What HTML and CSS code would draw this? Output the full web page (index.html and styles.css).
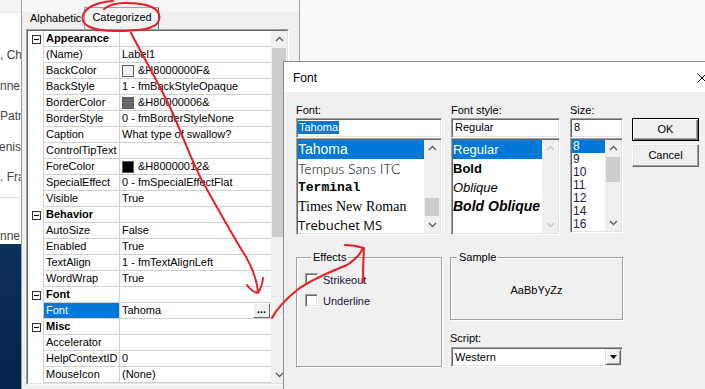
FILE: index.html
```html
<!DOCTYPE html>
<html>
<head>
<meta charset="utf-8">
<title>Font dialog</title>
<link rel="stylesheet" href="styles.css">
</head>
<body>
<div class="screen">
  <div class="bgwin">
    <div class="bg-top"></div>
    <div class="bg-list">
      <div class="bg-row">, Ch</div>
      <div class="bg-row">nne,</div>
      <div class="bg-row">Patr</div>
      <div class="bg-row shift">enise</div>
      <div class="bg-row">. Fra</div>
    </div>
    <div class="bg-foot">nne</div>
    <div class="bg-desk"></div>
  </div>

  <div class="props">
    <div class="tabs">
      <div class="tab">Alphabetic</div>
      <div class="tab sel">Categorized</div>
    </div>
    <div class="grid">
      <div class="grid-in">
        <div class="rows">
          <div class="row cat"><span class="gut"><svg width="9" height="9" viewBox="0 0 9 9"><rect x="0.5" y="0.5" width="8" height="8" fill="#fff" stroke="#333"/><path d="M2 4.5H7" stroke="#000"/></svg></span><span class="name">Appearance</span><span class="val"></span></div>
          <div class="row"><span class="gut"></span><span class="name">(Name)</span><span class="val">Label1</span></div>
          <div class="row"><span class="gut"></span><span class="name">BackColor</span><span class="val"><span class="sw sw-light"></span>&amp;H8000000F&amp;</span></div>
          <div class="row"><span class="gut"></span><span class="name">BackStyle</span><span class="val">1 - fmBackStyleOpaque</span></div>
          <div class="row"><span class="gut"></span><span class="name">BorderColor</span><span class="val"><span class="sw sw-gray"></span>&amp;H80000006&amp;</span></div>
          <div class="row"><span class="gut"></span><span class="name">BorderStyle</span><span class="val">0 - fmBorderStyleNone</span></div>
          <div class="row"><span class="gut"></span><span class="name">Caption</span><span class="val">What type of swallow?</span></div>
          <div class="row"><span class="gut"></span><span class="name">ControlTipText</span><span class="val"></span></div>
          <div class="row"><span class="gut"></span><span class="name">ForeColor</span><span class="val"><span class="sw sw-black"></span>&amp;H80000012&amp;</span></div>
          <div class="row"><span class="gut"></span><span class="name">SpecialEffect</span><span class="val">0 - fmSpecialEffectFlat</span></div>
          <div class="row"><span class="gut"></span><span class="name">Visible</span><span class="val">True</span></div>
          <div class="row cat"><span class="gut"><svg width="9" height="9" viewBox="0 0 9 9"><rect x="0.5" y="0.5" width="8" height="8" fill="#fff" stroke="#333"/><path d="M2 4.5H7" stroke="#000"/></svg></span><span class="name">Behavior</span><span class="val"></span></div>
          <div class="row"><span class="gut"></span><span class="name">AutoSize</span><span class="val">False</span></div>
          <div class="row"><span class="gut"></span><span class="name">Enabled</span><span class="val">True</span></div>
          <div class="row"><span class="gut"></span><span class="name">TextAlign</span><span class="val">1 - fmTextAlignLeft</span></div>
          <div class="row"><span class="gut"></span><span class="name">WordWrap</span><span class="val">True</span></div>
          <div class="row cat"><span class="gut"><svg width="9" height="9" viewBox="0 0 9 9"><rect x="0.5" y="0.5" width="8" height="8" fill="#fff" stroke="#333"/><path d="M2 4.5H7" stroke="#000"/></svg></span><span class="name">Font</span><span class="val"></span></div>
          <div class="row"><span class="gut"></span><span class="name selname">Font</span><span class="val">Tahoma<span class="dots">...</span></span></div>
          <div class="row cat"><span class="gut"><svg width="9" height="9" viewBox="0 0 9 9"><rect x="0.5" y="0.5" width="8" height="8" fill="#fff" stroke="#333"/><path d="M2 4.5H7" stroke="#000"/></svg></span><span class="name">Misc</span><span class="val"></span></div>
          <div class="row"><span class="gut"></span><span class="name">Accelerator</span><span class="val"></span></div>
          <div class="row"><span class="gut"></span><span class="name">HelpContextID</span><span class="val">0</span></div>
          <div class="row"><span class="gut"></span><span class="name">MouseIcon</span><span class="val">(None)</span></div>
        </div>
        <div class="vscroll">
          <div class="arr"><svg width="9" height="6" viewBox="0 0 9 6"><path d="M1 5L4.5 1.5L8 5" fill="none" stroke="#606060" stroke-width="1.4"/></svg></div>
          <div class="thumb big"></div>
          <div class="spacer"></div>
          <div class="arr"><svg width="9" height="6" viewBox="0 0 9 6"><path d="M1 1L4.5 4.5L8 1" fill="none" stroke="#606060" stroke-width="1.4"/></svg></div>
        </div>
      </div>
    </div>
  </div>

  <div class="dialog">
    <div class="titlebar">
      <span class="title">Font</span>
      <svg class="close" width="10" height="10" viewBox="0 0 10 10"><path d="M0.5 0.5L9.5 9.5M9.5 0.5L0.5 9.5" stroke="#111" stroke-width="1"/></svg>
    </div>
    <div class="dbody">
      <div class="toprow">
        <div class="col c-font">
          <div class="lbl">Font:</div>
          <div class="tbox"><span class="seltext">Tahoma</span></div>
          <div class="list l-font">
            <div class="items">
              <div class="it fi sel f-tahoma">Tahoma</div>
              <div class="it fi f-tempus">Tempus Sans ITC</div>
              <div class="it fi f-term">Terminal</div>
              <div class="it fi f-times">Times New Roman</div>
              <div class="it fi f-treb">Trebuchet MS</div>
            </div>
            <div class="sb">
              <div class="arr"><svg width="9" height="6" viewBox="0 0 9 6"><path d="M1 5L4.5 1.5L8 5" fill="none" stroke="#606060" stroke-width="1.4"/></svg></div>
              <div class="spacer"></div>
              <div class="thumb t-font"></div>
              <div class="arr"><svg width="9" height="6" viewBox="0 0 9 6"><path d="M1 1L4.5 4.5L8 1" fill="none" stroke="#606060" stroke-width="1.4"/></svg></div>
            </div>
          </div>
        </div>
        <div class="col c-style">
          <div class="lbl">Font style:</div>
          <div class="tbox"><span class="plain">Regular</span></div>
          <div class="list l-style">
            <div class="items">
              <div class="it si sel">Regular</div>
              <div class="it si s-bold">Bold</div>
              <div class="it si s-obl">Oblique</div>
              <div class="it si s-bobl">Bold Oblique</div>
            </div>
            <div class="sb">
              <div class="arr"><svg width="9" height="6" viewBox="0 0 9 6"><path d="M1 5L4.5 1.5L8 5" fill="none" stroke="#c4c4c4" stroke-width="1.4"/></svg></div>
              <div class="spacer"></div>
              <div class="arr"><svg width="9" height="6" viewBox="0 0 9 6"><path d="M1 1L4.5 4.5L8 1" fill="none" stroke="#c4c4c4" stroke-width="1.4"/></svg></div>
            </div>
          </div>
        </div>
        <div class="col c-size">
          <div class="lbl">Size:</div>
          <div class="tbox"><span class="plain">8</span></div>
          <div class="list l-size">
            <div class="items">
              <div class="it zi sel">8</div>
              <div class="it zi">9</div>
              <div class="it zi">10</div>
              <div class="it zi">11</div>
              <div class="it zi">12</div>
              <div class="it zi">14</div>
              <div class="it zi">16</div>
            </div>
            <div class="sb">
              <div class="arr"><svg width="9" height="6" viewBox="0 0 9 6"><path d="M1 5L4.5 1.5L8 5" fill="none" stroke="#606060" stroke-width="1.4"/></svg></div>
              <div class="thumb t-size"></div>
              <div class="spacer"></div>
              <div class="arr"><svg width="9" height="6" viewBox="0 0 9 6"><path d="M1 1L4.5 4.5L8 1" fill="none" stroke="#606060" stroke-width="1.4"/></svg></div>
            </div>
          </div>
        </div>
        <div class="col c-btns">
          <div class="btn def">OK</div>
          <div class="btn">Cancel</div>
        </div>
      </div>
      <div class="botrow">
        <fieldset class="grp g-eff">
          <legend>Effects</legend>
          <div class="chk first"><span class="box"></span><span class="chk-t">Strikeout</span></div>
          <div class="chk"><span class="box"></span><span class="chk-t">Underline</span></div>
        </fieldset>
        <div class="rcol">
          <fieldset class="grp g-sample">
            <legend>Sample</legend>
            <div class="sample">AaBbYyZz</div>
          </fieldset>
          <div class="lbl script">Script:</div>
          <div class="combo">
            <span class="combo-t">Western</span>
            <span class="ddbtn"><svg width="7" height="4" viewBox="0 0 7 4"><path d="M0 0H7L3.5 4Z" fill="#000"/></svg></span>
          </div>
        </div>
      </div>
    </div>
  </div>

  <svg class="ink" width="705" height="389" viewBox="0 0 705 389">
    <g fill="none" stroke="#ec1c24" stroke-width="2" stroke-linecap="round" stroke-linejoin="round">
      <path d="M113 1C100 2 86 6 83 15C80 25 92 31 115 31C135 31 157 30 159 20C162 8 148 3 125 3C116 3 109 5 104 9"/>
      <path d="M131 33C140 50 152 72 165 97C180 126 190 160 205 186C219 211 233 236 246 257C253 269 257 281 258 292"/>
      <path d="M247 285Q252 292 258 293Q262 287 263 278"/>
      <path d="M272 318C276 310 285 300 297 290C312 279 330 272 347 265C355 260 360 255 363 248"/>
      <path d="M345 245Q355 245 364 248Q363 265 363 282"/>
    </g>
  </svg>
</div>
</body>
</html>
```
FILE: styles.css
```css
html, body {
  margin: 0;
  padding: 0;
}
body {
  font-family: "Liberation Sans", Arial, sans-serif;
  font-size: 11px;
  color: #000;
  background: #f9f9f9;
}
.screen {
  position: relative;
  width: 705px;
  height: 389px;
  overflow: hidden;
  display: flex;
  background: #f9f9f9;
}

/* background window on the left */
.bgwin {
  width: 21px;
  flex: none;
  display: flex;
  flex-direction: column;
  overflow: hidden;
}
.bg-top {
  height: 12px;
  background: #f3f3f3;
  border-bottom: 1px solid #e4e4e4;
  flex: none;
}
.bg-list {
  background: #fff;
  padding-top: 27px;
  padding-bottom: 4px;
  border-bottom: 1px solid #e2e2e2;
  flex: none;
}
.bg-row {
  height: 30.5px;
  line-height: 30.5px;
  font-size: 12px;
  color: #444;
  white-space: nowrap;
}
.bg-row.shift {
  margin-left: -1px;
}
.bg-foot {
  height: 46px;
  box-sizing: border-box;
  padding-top: 31px;
  line-height: 14px;
  font-size: 12px;
  color: #444;
  background: #fff;
  white-space: nowrap;
  flex: none;
}
.bg-desk {
  flex: 1;
  background: linear-gradient(180deg, #0c3159 0%, #082a50 50%, #07244a 100%);
}

/* properties window */
.props {
  width: 279px;
  flex: none;
  box-sizing: border-box;
  border-left: 1px solid #a0a0a0;
  border-right: 1px solid #a0a0a0;
  padding-left: 4px;
  background: linear-gradient(180deg, #f7f7f7 0, #f7f7f7 12px, #f0f0f0 12px);
  display: flex;
  flex-direction: column;
}
.tabs {
  height: 29px;
  display: flex;
  align-items: flex-end;
  padding-left: 1px;
  flex: none;
}
.tab {
  height: 21px;
  line-height: 21px;
  padding: 0 3px;
  white-space: nowrap;
}
.tab.sel {
  height: 22px;
  line-height: 19px;
  box-sizing: border-box;
  padding: 0 6px 0 7px;
  border: 1px solid #a0a0a0;
  border-right-color: #707070;
  border-bottom: none;
  background: #f4f4f4;
}
.grid {
  width: 263px;
  box-sizing: border-box;
  border: 1px solid;
  border-color: #a0a0a0 #ffffff #ffffff #a0a0a0;
  flex: none;
}
.grid-in {
  border: 1px solid;
  border-color: #696969 #e3e3e3 #e3e3e3 #696969;
  display: flex;
  background: #fff;
}
.rows {
  width: 243px;
  flex: none;
}
.row {
  display: flex;
  height: 16px;
  line-height: 15px;
  white-space: nowrap;
}
.gut {
  width: 15px;
  flex: none;
  display: flex;
  align-items: center;
  justify-content: center;
  padding-left: 2px;
  box-sizing: border-box;
}
.name {
  width: 76px;
  flex: none;
  box-sizing: border-box;
  border-left: 1px solid #d0d0d0;
  border-bottom: 1px solid #d0d0d0;
  padding-left: 2px;
  overflow: hidden;
}
.val {
  flex: 1;
  box-sizing: border-box;
  border-left: 1px solid #d0d0d0;
  border-bottom: 1px solid #d0d0d0;
  padding-left: 2px;
  display: flex;
  align-items: center;
  overflow: hidden;
}
.cat .name {
  font-weight: bold;
}
.selname {
  background: #0078d7;
  color: #fff;
}
.sw {
  width: 12px;
  height: 12px;
  box-sizing: border-box;
  border: 1px solid #5a5a5a;
  margin-right: 4px;
  flex: none;
}
.sw-light { background: #f0f0f0; }
.sw-gray { background: #696969; }
.sw-black { background: #000; }
.dots {
  margin-left: auto;
  margin-right: 1px;
  width: 17px;
  height: 15px;
  box-sizing: border-box;
  border: 1px solid;
  border-color: #fff #696969 #696969 #fff;
  background: #f0f0f0;
  font-weight: bold;
  text-align: center;
  line-height: 11px;
  font-size: 11px;
}
.vscroll {
  width: 16px;
  flex: none;
  background: #f0f0f0;
  display: flex;
  flex-direction: column;
}
.arr {
  height: 16px;
  flex: none;
  display: flex;
  align-items: center;
  justify-content: center;
}
.thumb {
  flex: none;
  margin: 0 1px;
  background: #cdcdcd;
}
.thumb.big {
  height: 189px;
  margin-top: 1px;
}
.spacer {
  flex: 1;
}

/* Font dialog */
.dialog {
  position: absolute;
  left: 283px;
  top: 61px;
  width: 440px;
  height: 340px;
  box-sizing: border-box;
  border: 1px solid #8e8e8e;
  background: #f0f0f0;
  z-index: 2;
  display: flex;
  flex-direction: column;
}
.titlebar {
  height: 30px;
  flex: none;
  background: #fff;
  display: flex;
  align-items: center;
  justify-content: space-between;
  padding: 1px 15px 0 9px;
  box-sizing: border-box;
}
.title {
  font-size: 12px;
}
.close {
  display: block;
}
.dbody {
  padding: 12px 0 0 12px;
}
.toprow {
  display: flex;
  align-items: flex-start;
}
.col {
  flex: none;
  display: flex;
  flex-direction: column;
}
.c-font { width: 146px; }
.c-style { width: 109px; margin-left: 9px; }
.c-size { width: 53px; margin-left: 10px; }
.c-btns { width: 67px; margin-left: 9px; padding-top: 14px; }
.lbl {
  height: 13px;
  line-height: 13px;
  margin-bottom: 1px;
  white-space: nowrap;
}
.tbox {
  height: 20px;
  box-sizing: border-box;
  border: 1px solid;
  border-color: #a0a0a0 #fff #fff #a0a0a0;
  box-shadow: inset 1px 1px 0 #696969, inset -1px -1px 0 #e3e3e3;
  background: #fff;
  padding: 2px 2px 0 2px;
  line-height: 13px;
  white-space: nowrap;
}
.seltext {
  display: inline-block;
  background: #0078d7;
  color: #fff;
  padding: 0 1px 0 1px;
  margin-left: -1px;
  margin-top: -1px;
  line-height: 13px;
}
.plain {
  padding-left: 1px;
}
.list {
  box-sizing: border-box;
  border: 1px solid;
  border-color: #a0a0a0 #fff #fff #a0a0a0;
  background: #fff;
  display: flex;
  padding: 1px;
  box-shadow: inset 1px 1px 0 #696969, inset -1px -1px 0 #e3e3e3;
}
.l-font, .l-style { height: 97px; }
.l-size { height: 95px; }
.items {
  flex: 1;
  overflow: hidden;
  min-width: 0;
}
.sb {
  width: 16px;
  flex: none;
  background: #f0f0f0;
  display: flex;
  flex-direction: column;
}
.t-font {
  height: 18px;
  margin-bottom: 1px;
}
.t-size {
  height: 25px;
  margin-top: 1px;
}
.it {
  white-space: nowrap;
  overflow: hidden;
}
.it.sel {
  background: #0078d7;
  color: #fff;
}
.fi {
  height: 19px;
  line-height: 19px;
  padding-left: 0;
}
.f-tahoma { font-family: "Liberation Sans", Arial, sans-serif; font-size: 14px; }
.f-tempus { font-family: Lato, "Liberation Sans", sans-serif; font-weight: 300; font-size: 14px; color: #000; }
.f-term { font-family: "Liberation Mono", "DejaVu Sans Mono", monospace; font-weight: bold; font-size: 13px; }
.f-times { font-family: "Liberation Serif", "Times New Roman", serif; font-size: 14px; }
.f-treb { font-family: "Open Sans", "Liberation Sans", sans-serif; font-size: 13px; }
.si {
  height: 19px;
  line-height: 19px;
  font-size: 13px;
}
.s-bold { font-weight: bold; }
.s-obl { font-style: italic; }
.s-bobl { font-weight: bold; font-style: italic; font-size: 14px; }
.zi {
  height: 13px;
  line-height: 13px;
  font-size: 12px;
  padding-left: 1px;
  color: #1a1a50;
}
.zi.sel { color: #fff; }
.btn {
  height: 23px;
  box-sizing: border-box;
  border: 1px solid;
  border-color: #fff #696969 #696969 #fff;
  box-shadow: inset -1px -1px 0 #a0a0a0, inset 1px 1px 0 #e3e3e3;
  background: #f0f0f0;
  text-align: center;
  line-height: 20px;
  font-size: 11px;
}
.btn + .btn {
  margin-top: 3px;
}
.btn.def {
  border: 1px solid #000;
  box-shadow: inset 1px 1px 0 #fff, inset -1px -1px 0 #696969, inset -2px -2px 0 #a0a0a0;
}
.botrow {
  display: flex;
  margin-top: 16px;
  align-items: flex-start;
}
.grp {
  margin: 0;
  padding: 0;
  min-width: 0;
  box-sizing: border-box;
  border: 1px solid #a0a0a0;
  box-shadow: 1px 1px 0 #fff, inset 1px 1px 0 #fff;
}
.grp legend {
  padding: 0 2px;
  margin-left: 6px;
  line-height: 13px;
  height: 13px;
  background: #f0f0f0;
}
.g-eff {
  width: 146px;
  height: 116px;
  padding-left: 8px;
  flex: none;
}
.chk {
  display: flex;
  align-items: center;
  height: 13px;
  margin-top: 8px;
  color: #1a1040;
}
.chk.first {
  margin-top: 9px;
}
.box {
  width: 13px;
  height: 13px;
  box-sizing: border-box;
  border: 1px solid;
  border-color: #a0a0a0 #fff #fff #a0a0a0;
  box-shadow: inset 1px 1px 0 #696969, inset -1px -1px 0 #e3e3e3;
  background: #fff;
  margin-right: 5px;
  flex: none;
}
.rcol {
  width: 173px;
  margin-left: 8px;
  flex: none;
  display: flex;
  flex-direction: column;
}
.g-sample {
  width: 173px;
  height: 69px;
}
.sample {
  text-align: center;
  margin-top: 20px;
  line-height: 13px;
}
.script {
  margin-top: 12px;
  margin-bottom: 2px;
}
.combo {
  width: 172px;
  height: 20px;
  margin-left: 1px;
  box-sizing: border-box;
  border: 1px solid;
  border-color: #a0a0a0 #fff #fff #a0a0a0;
  box-shadow: inset 1px 1px 0 #696969, inset -1px -1px 0 #e3e3e3;
  background: #fff;
  padding: 1px 1px 1px 2px;
  display: flex;
  align-items: center;
}
.combo-t {
  flex: 1;
  padding-left: 1px;
  line-height: 16px;
}
.ddbtn {
  width: 16px;
  height: 16px;
  box-sizing: border-box;
  border: 1px solid;
  border-color: #e3e3e3 #696969 #696969 #e3e3e3;
  box-shadow: inset 1px 1px 0 #fff, inset -1px -1px 0 #a0a0a0;
  background: #f0f0f0;
  display: flex;
  align-items: center;
  justify-content: center;
  flex: none;
}

.ink {
  position: absolute;
  left: 0;
  top: 0;
  z-index: 3;
  pointer-events: none;
}
```
